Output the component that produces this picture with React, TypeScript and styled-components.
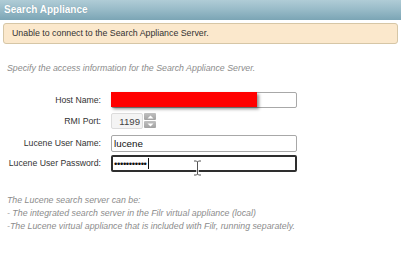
import React from 'react';
import styled, { createGlobalStyle } from 'styled-components';

const GlobalStyle = createGlobalStyle`
  html, body {
    margin: 0;
    padding: 0;
    background: #ffffff;
  }
  body {
    font-family: 'Liberation Sans', Arial, sans-serif;
    color: #333;
  }
`;

const Panel = styled.div`
  width: 401px;
  height: 268px;
  overflow: hidden;
  position: relative;
  background: #fff;
`;

const Header = styled.div`
  height: 20px;
  line-height: 19px;
  padding-left: 4px;
  background: linear-gradient(to bottom, #b0ccd6 0%, #97bac7 50%, #7ba5b5 100%);
  color: #fff;
  font-size: 10px;
  font-weight: bold;
  text-shadow: 0 0 1px rgba(60, 100, 115, 0.4);
`;

const Alert = styled.div`
  box-sizing: border-box;
  margin: 3px 3px 0 3px;
  height: 21px;
  line-height: 19px;
  padding-left: 8px;
  background: #fbe8cc;
  border: 1px solid #d6c6a6;
  border-radius: 3px;
  font-size: 8.8px;
  color: #333;
`;

const Hint = styled.p<{ $top: number; $lh: number }>`
  margin: ${(p) => p.$top}px 0 0 7px;
  font-size: 8.8px;
  line-height: ${(p) => p.$lh}px;
  font-style: italic;
  color: #8c8c8c;
`;

const Form = styled.div`
  display: grid;
  grid-template-columns: 101px 186px;
  grid-template-rows: 21px 22px 20px 17px;
  column-gap: 10px;
  margin-top: 18px;
`;

const Label = styled.label<{ $h: number }>`
  height: ${(p) => p.$h}px;
  line-height: ${(p) => p.$h}px;
  text-align: right;
  font-size: 8.7px;
  color: #333;
  white-space: nowrap;
`;

const Cell = styled.div`
  position: relative;
  display: flex;
  align-items: flex-start;
`;

const TextInput = styled.input<{ $h: number }>`
  box-sizing: border-box;
  width: 186px;
  height: ${(p) => p.$h}px;
  margin: 0;
  padding: 0 2px;
  border: 1px solid #a8a8a8;
  border-radius: 2px;
  background: #fff;
  font-family: 'Liberation Sans', Arial, sans-serif;
  font-size: 9.8px;
  color: #111;
  outline: none;
`;

const PortInput = styled.input`
  box-sizing: border-box;
  width: 32px;
  height: 16px;
  margin: 0;
  padding: 0 2px 0 0;
  border: 1px solid #dcdcdc;
  border-radius: 2px;
  background: #f4f4f4;
  text-align: right;
  font-family: 'Liberation Sans', Arial, sans-serif;
  font-size: 9.6px;
  color: #444;
  outline: none;
`;

const Spinner = styled.div`
  display: flex;
  flex-direction: column;
  gap: 1px;
  width: 12px;
  height: 15px;
  margin-left: 1px;
`;

const SpinButton = styled.div`
  flex: 1;
  display: flex;
  align-items: center;
  justify-content: center;
  background: linear-gradient(to bottom, #c0c0c0, #a2a2a2);
  border-radius: 1px;
`;

const FocusBox = styled.div`
  box-sizing: border-box;
  width: 186px;
  height: 17px;
  border: 2px solid #2e2e2e;
  border-radius: 2px;
  padding-left: 1px;
  display: flex;
  align-items: center;
  font-size: 9.6px;
  color: #111;
  letter-spacing: -0.4px;
`;

const Caret = styled.span`
  display: inline-block;
  width: 1px;
  height: 11px;
  margin-left: 1px;
  background: #111;
`;

const Redaction = styled.div`
  position: absolute;
  left: 0;
  top: 0;
  width: 146px;
  height: 15px;
  background: #ff0000;
  box-shadow: 2px 2px 3px rgba(0, 0, 0, 0.45);
`;

const Pointer = styled.svg`
  position: absolute;
  left: 193px;
  top: 160px;
`;

const Arrow = ({ up }: { up: boolean }) => (
  <svg width="7" height="4" viewBox="0 0 7 4">
    <path d={up ? 'M0.5 3.5 L3.5 0.5 L6.5 3.5 Z' : 'M0.5 0.5 L3.5 3.5 L6.5 0.5 Z'} fill="#fff" />
  </svg>
);

export default function App() {
  return (
    <Panel>
      <GlobalStyle />
      <Header>Search Appliance</Header>
      <Alert>Unable to connect to the Search Appliance Server.</Alert>
      <Hint $top={19} $lh={11}>
        Specify the access information for the Search Appliance Server.
      </Hint>
      <Form>
        <Label $h={16}>Host Name:</Label>
        <Cell>
          <TextInput $h={16} readOnly value="" />
          <Redaction />
        </Cell>
        <Label $h={16}>RMI Port:</Label>
        <Cell>
          <PortInput readOnly value="1199" />
          <Spinner>
            <SpinButton><Arrow up /></SpinButton>
            <SpinButton><Arrow up={false} /></SpinButton>
          </Spinner>
        </Cell>
        <Label $h={17}>Lucene User Name:</Label>
        <Cell>
          <TextInput $h={17} readOnly value="lucene" />
        </Cell>
        <Label $h={17}>Lucene User Password:</Label>
        <Cell>
          <FocusBox>
            {'\u2022'.repeat(11)}
            <Caret />
          </FocusBox>
        </Cell>
      </Form>
      <Hint $top={22} $lh={13}>
        The Lucene search server can be:
        <br />- The integrated search server in the Filr virtual appliance (local)
        <br />-The Lucene virtual appliance that is included with Filr, running separately.
      </Hint>
      <Pointer width="9" height="16" viewBox="0 0 9 16">
        <path
          d="M1 1 H3.5 L4.5 2 L5.5 1 H8 M4.5 2 V14 M1 15 H3.5 L4.5 14 L5.5 15 H8"
          fill="none"
          stroke="#fff"
          strokeWidth="2.4"
        />
        <path
          d="M1 1 H3.5 L4.5 2 L5.5 1 H8 M4.5 2 V14 M1 15 H3.5 L4.5 14 L5.5 15 H8"
          fill="none"
          stroke="#555"
          strokeWidth="1"
        />
      </Pointer>
    </Panel>
  );
}
